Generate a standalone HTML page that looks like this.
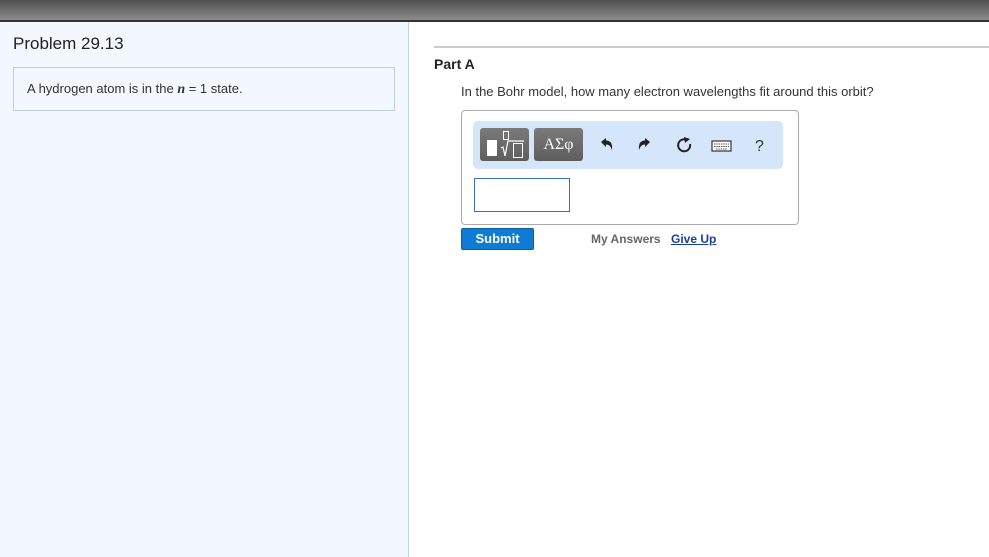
<!DOCTYPE html>
<html><head><meta charset="utf-8"><style>
*{margin:0;padding:0;box-sizing:border-box}
body{width:989px;height:557px;overflow:hidden;background:#fff;font-family:"Liberation Sans",Arial,sans-serif;position:relative}
.top{position:absolute;left:0;top:0;width:989px;height:22px;background:linear-gradient(#4e4e4e,#8c8c8c);border-bottom:2px solid #333}
.left{position:absolute;left:0;top:22px;width:409px;height:535px;background:#f3f8fe;border-right:1px solid #c2d5e6}
.a{position:absolute}
</style></head><body>
<div class="top"></div>
<div class="left"></div>
<div class="a" style="left:13px;top:34px;font-size:17px;color:#222">Problem 29.13</div>
<div class="a" style="left:13px;top:67px;width:382px;height:44px;border:1px solid #bcd0e2;background:#f3f8fe"></div>
<div class="a" style="left:27px;top:81px;font-size:13px;color:#333">A hydrogen atom is in the <i style="font-family:'Liberation Serif',serif;font-weight:bold;font-size:14px">n</i> = 1 state.</div>
<div class="a" style="left:434px;top:46px;width:555px;height:2px;background:#ccc"></div>
<div class="a" style="left:434px;top:56px;font-size:14px;font-weight:bold;color:#222">Part A</div>
<div class="a" style="left:461px;top:84px;font-size:13px;color:#333">In the Bohr model, how many electron wavelengths fit around this orbit?</div>
<div class="a" style="left:461px;top:110px;width:338px;height:115px;border:1px solid #aaa;border-radius:4px;background:#fff"></div>
<div class="a" style="left:473px;top:121px;width:310px;height:48px;background:#d5e6fb;border-radius:5px"></div>
<div class="a" style="left:480px;top:128px;width:49px;height:33px;background:linear-gradient(#7a7a7a,#5e5e5e);border-radius:3px"></div>
<div class="a" style="left:487px;top:140px;width:10px;height:16px;background:#fff"></div>
<svg class="a" style="left:480px;top:128px" width="49" height="33"><path d="M21 20 L23 19 L25 28 L28 13 L44 13" fill="none" stroke="#fff" stroke-width="1.2"/><rect x="23.5" y="3.5" width="5" height="8" fill="none" stroke="#fff"/><rect x="33.5" y="15.5" width="9" height="14" fill="none" stroke="#fff"/></svg>
<div class="a" style="left:534px;top:128px;width:49px;height:33px;background:linear-gradient(#7a7a7a,#5e5e5e);border-radius:3px;color:#fff;font-family:'Liberation Serif',serif;font-size:16px;text-align:center;line-height:33px">ΑΣφ</div>
<svg class="a" style="left:598px;top:136px" width="180" height="20" viewBox="0 0 180 20">
<path d="M3 6 L8 2 L8 4.5 Q15 4.5 14 14 Q12 8 8 8.5 L8 11 Z" fill="#222"/>
<path d="M52 6 L47 2 L47 4.5 Q40 4.5 41 14 Q43 8 47 8.5 L47 11 Z" fill="#222"/>
<path d="M89 4 A6 6 0 1 0 92 8" fill="none" stroke="#222" stroke-width="2"/>
<path d="M86 1 L92 3 L87 7 Z" fill="#222"/>
<rect x="114" y="5" width="19" height="10" fill="#fff" stroke="#333" stroke-width="1.2"/>
<path d="M116 8h15M116 10.5h15M118 13h11" stroke="#555" stroke-width="1" stroke-dasharray="1.5 0.8"/>
<text x="157" y="15" font-family="Liberation Sans" font-size="16" fill="#333">?</text>
</svg>
<div class="a" style="left:474px;top:178px;width:96px;height:34px;border:1px solid #3a6fc8"></div>
<div class="a" style="left:461px;top:228px;width:73px;height:22px;background:#0f7bd2;border:1px solid #0a5ea5;border-radius:2px;color:#fff;font-weight:bold;font-size:13px;text-align:center;line-height:20px">Submit</div>
<div class="a" style="left:591px;top:232px;font-size:12px;font-weight:bold;color:#666">My Answers</div>
<div class="a" style="left:671px;top:232px;font-size:12px;font-weight:bold;color:#1a3fa0;text-decoration:underline">Give Up</div>
</body></html>
